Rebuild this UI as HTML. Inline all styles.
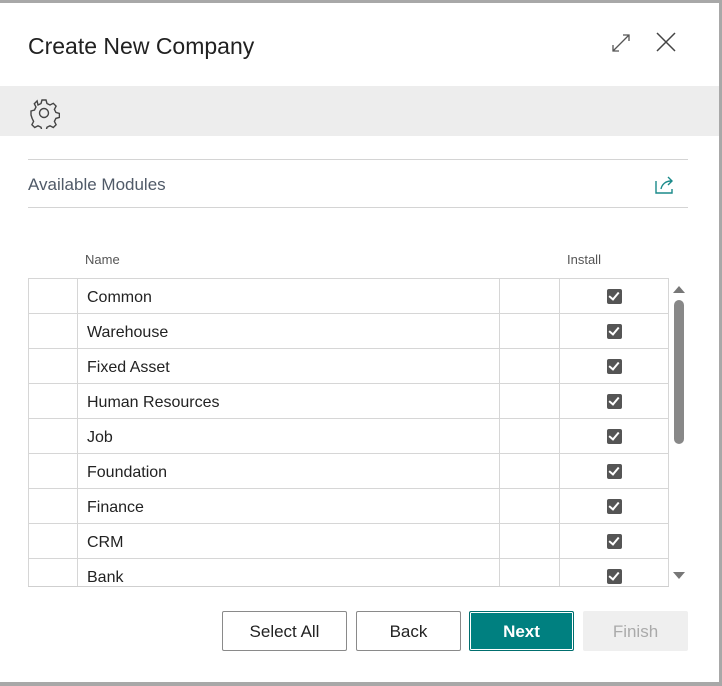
<!DOCTYPE html>
<html><head><style>
*{margin:0;padding:0;box-sizing:border-box}
body{width:722px;height:686px;background:#a8a8a8;font-family:"Liberation Sans",sans-serif;position:relative;overflow:hidden}
.dlg{position:absolute;left:0;top:3px;width:719px;height:679px;background:#fff}
.t{position:absolute;left:28px;top:30px;font-size:23px;color:#212121}
.band{position:absolute;left:0;top:83px;width:719px;height:50px;background:#ededed}
.hl{position:absolute;left:28px;width:660px;height:1px;background:#d4d4d4}
.am{position:absolute;left:28px;top:172px;font-size:17px;color:#505a68}
.th{position:absolute;top:249px;font-size:13px;color:#555}
.tbl{position:absolute;left:28px;top:275px;width:641px;height:308px;border:1px solid #d6d6d6;border-bottom:none;overflow:hidden}
.row{height:35px;border-bottom:1px solid #d6d6d6;position:relative;font-size:16px;color:#222}
.row span{position:absolute;left:58px;top:10px}
.vl{position:absolute;top:0;bottom:0;width:1px;background:#d6d6d6}
.cb{position:absolute;left:578px;top:10px;width:15px;height:15px;background:#555;border-radius:2px}
.cb:after{content:"";position:absolute;left:4px;top:1px;width:4px;height:8px;border:solid #fff;border-width:0 2px 2px 0;transform:rotate(40deg)}
.btn{position:absolute;top:608px;height:40px;border:1px solid #8a8a8a;border-radius:2px;font-size:17px;text-align:center;line-height:40px;color:#222;background:#fff}
</style></head><body>
<div class="dlg">
<div class="t">Create New Company</div>
<svg style="position:absolute;left:610px;top:29px" width="22" height="22" viewBox="0 0 22 22" fill="none" stroke="#555" stroke-width="1.3"><path d="M3 19L19 3M13 3h6v6M3 13v6h6"/></svg>
<svg style="position:absolute;left:654px;top:27px" width="24" height="24" viewBox="0 0 24 24" fill="none" stroke="#444" stroke-width="1.5"><path d="M3 3L21 21M21 3L3 21"/></svg>
<div class="band"><svg style="position:absolute;left:28px;top:11px" width="32" height="32" viewBox="0 0 32 32" fill="none" stroke="#444" stroke-width="1.4"><circle cx="16" cy="16" r="4.5"/><path d="M14 3h4l1 3.5 3 1.5 3.3-1.7 2.8 2.8-1.7 3.3 1.5 3 3.5 1v4l-3.5 1-1.5 3 1.7 3.3-2.8 2.8-3.3-1.7-3 1.5-1 3.5h-4l-1-3.5-3-1.5-3.3 1.7-2.8-2.8 1.7-3.3-1.5-3L3 18v-4l3.5-1 1.5-3-1.7-3.3 2.8-2.8L10 8l3-1.5z"/></svg></div>
<div class="hl" style="top:156px"></div>
<div class="am">Available Modules</div>
<svg style="position:absolute;left:654px;top:172px" width="22" height="20" viewBox="0 0 22 20" fill="none" stroke="#1a8a8a" stroke-width="1.4"><path d="M2 6v12h16v-4M7 14c1-5 5-8 10-8M14 2l4 4-4 4"/></svg>
<div class="hl" style="top:204px"></div>
<div class="th" style="left:85px">Name</div>
<div class="th" style="left:567px">Install</div>
<div class="tbl">
<div class="vl" style="left:48px"></div><div class="vl" style="left:470px"></div><div class="vl" style="left:530px"></div>
<div class="row"><span>Common</span><i class="cb"></i></div>
<div class="row"><span>Warehouse</span><i class="cb"></i></div>
<div class="row"><span>Fixed Asset</span><i class="cb"></i></div>
<div class="row"><span>Human Resources</span><i class="cb"></i></div>
<div class="row"><span>Job</span><i class="cb"></i></div>
<div class="row"><span>Foundation</span><i class="cb"></i></div>
<div class="row"><span>Finance</span><i class="cb"></i></div>
<div class="row"><span>CRM</span><i class="cb"></i></div>
<div class="row"><span>Bank</span><i class="cb"></i></div>
</div>
<div style="position:absolute;left:28px;top:583px;width:641px;height:1px;background:#cfcfcf"></div>
<div style="position:absolute;left:673px;top:283px;width:0;height:0;border-left:6px solid transparent;border-right:6px solid transparent;border-bottom:7px solid #777"></div>
<div style="position:absolute;left:674px;top:297px;width:10px;height:144px;background:#888;border-radius:5px"></div>
<div style="position:absolute;left:673px;top:569px;width:0;height:0;border-left:6px solid transparent;border-right:6px solid transparent;border-top:7px solid #777"></div>
<div class="btn" style="left:222px;width:125px">Select All</div>
<div class="btn" style="left:356px;width:105px">Back</div>
<div class="btn" style="left:469px;width:105px;background:#008080;color:#fff;font-weight:bold;border:1px solid #006e6e;box-shadow:inset 0 0 0 1px #fff">Next</div>
<div class="btn" style="left:583px;width:105px;background:#efefef;border-color:#efefef;color:#aaa">Finish</div>
</div>
</body></html>
